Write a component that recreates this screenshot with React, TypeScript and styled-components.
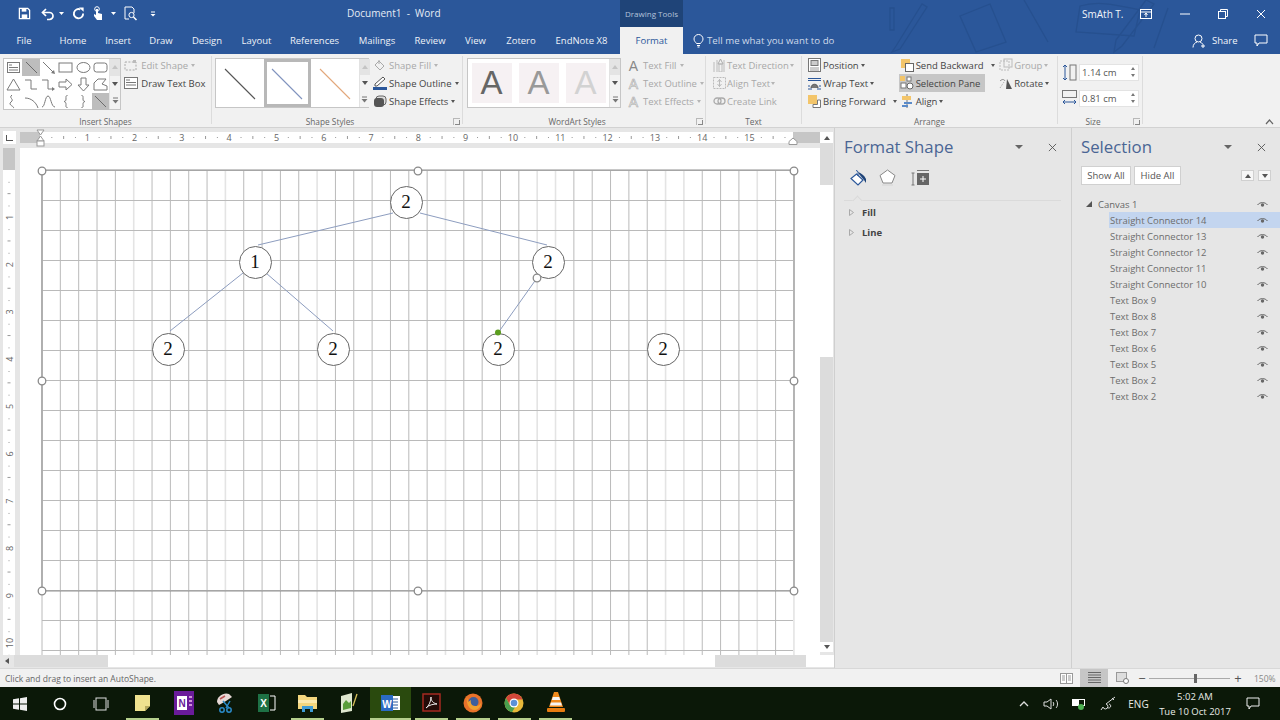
import React from "react";
import styled, { createGlobalStyle } from "styled-components";

const UI = `"Open Sans", "Noto Sans", "Liberation Sans", sans-serif`;

const Global = createGlobalStyle`
  html, body { margin: 0; padding: 0; background: #e6e6e6; }
  #root { width: 1280px; height: 720px; overflow: hidden; }
  * { box-sizing: border-box; }
  svg { display: block; flex: none; }
`;

const Shell = styled.div`
  width: 1280px; height: 720px; display: flex; flex-direction: column;
  font-family: ${UI}; font-size: 10px; color: #444; overflow: hidden;
`;

/* ---------- header ---------- */
const Header = styled.header`
  position: relative; height: 54px; flex: none; background: #2b579a; color: #f2f5fa;
`;
const Doodles = styled.svg`
  position: absolute; left: 860px; top: 0; pointer-events: none;
`;
const TitleRow = styled.div`
  position: relative; height: 27px; display: flex; align-items: center;
`;
const Qat = styled.div`
  width: 347px; height: 27px; padding-left: 17px; display: flex; align-items: center;
`;
const QatSlot = styled.span<{ $w: number; $ml?: number }>`
  width: ${(p) => p.$w}px; margin-left: ${(p) => p.$ml ?? 0}px; display: flex; align-items: center; justify-content: center;
`;
const DocTitle = styled.div`
  width: 273px; padding-bottom: 1px; font-size: 10px; white-space: pre; color: #e6ecf5;
`;
const ContextTab = styled.div`
  width: 63px; height: 27px; background: #1f4478; color: #b4c3da; font-size: 8px;
  display: flex; align-items: center; justify-content: center; white-space: nowrap;
`;
const UserArea = styled.div`
  margin-left: auto; height: 27px; display: flex; align-items: center;
`;
const UserName = styled.span`
  width: 54px; font-size: 10px; white-space: nowrap;
`;
const DisplayBtn = styled.span`
  width: 30px; padding-right: 10px; display: flex; justify-content: center;
`;
const WinBtn = styled.span`
  width: 38px; display: flex; justify-content: center;
`;
const TabRow = styled.nav`
  position: relative; height: 27px; display: flex; align-items: stretch;
`;
const Tab = styled.span<{ $w: number; $active?: boolean }>`
  width: ${(p) => p.$w}px; display: flex; align-items: center; justify-content: center;
  white-space: nowrap; font-size: 9.5px;
  background: ${(p) => (p.$active ? "#f1f1f1" : "transparent")};
  color: ${(p) => (p.$active ? "#2b579a" : "#eef2f8")};
`;
const TellMe = styled.div`
  padding-left: 10px; display: flex; align-items: center; gap: 3px; color: #cfdaea; font-size: 9.7px;
  white-space: nowrap;
`;
const ShareArea = styled.div`
  margin-left: auto; display: flex; align-items: center; padding-right: 12px;
`;
const ShareLabel = styled.span`
  width: 48px; padding-left: 6px; font-size: 9.5px;
`;

/* ---------- ribbon ---------- */
const Ribbon = styled.section`
  position: relative; height: 74px; flex: none; display: flex; background: #f1f1f1;
  border-bottom: 1px solid #d2d2d2;
`;
const Group = styled.div<{ $w: number; $plain?: boolean }>`
  position: relative; width: ${(p) => p.$w}px; flex: none; margin-top: 2px; height: 68px;
  display: flex; flex-direction: column;
  border-right: ${(p) => (p.$plain ? "none" : "1px solid #dcdcdc")};
`;
const GroupBody = styled.div<{ $pad?: number }>`
  height: 59px; flex: none; padding-left: ${(p) => p.$pad ?? 4}px; display: flex; align-items: flex-start;
`;
const GroupLabel = styled.div<{ $launcher?: boolean }>`
  position: relative; height: 14px; flex: none; line-height: 14px; text-align: center; font-size: 8.3px; color: #666;
  white-space: nowrap; padding-right: ${(p) => (p.$launcher ? 14 : 0)}px;
`;
const Launcher = styled.span`
  position: absolute; right: 2px; top: 3px; width: 7px; height: 7px;
  border-left: 1px solid #b8b8b8; border-top: 1px solid #b8b8b8;
  &::after { content: ""; position: absolute; right: 0; bottom: 0; width: 4px; height: 4px;
    border-right: 1px solid #888; border-bottom: 1px solid #888; }
`;
const Collapse = styled.span`
  position: absolute; right: 6px; bottom: 2px;
`;
const ShapeGallery = styled.div`
  width: 120px; height: 52px; margin-top: 2px; background: #fff; border: 1px solid #c6c6c6;
  display: flex;
`;
const ShapeGrid = styled.div`
  flex: 1; display: grid; grid-template-columns: repeat(6, 1fr); grid-auto-rows: 17px; padding-left: 1px;
`;
const ShapeCell = styled.span<{ $on?: boolean }>`
  display: flex; align-items: center; justify-content: center;
  background: ${(p) => (p.$on ? "#bdbdbd" : "transparent")};
`;
const GalleryScroll = styled.div`
  width: 11px; flex: none; display: flex; flex-direction: column; border-left: 1px solid #e2e2e2;
`;
const ScrollCell = styled.span<{ $dim?: boolean }>`
  flex: 1; display: flex; align-items: center; justify-content: center;
  background: ${(p) => (p.$dim ? "#e4e4e4" : "#f3f3f3")};
`;
const Column = styled.div<{ $w: number; $ml?: number; $pt?: number }>`
  width: ${(p) => p.$w}px; margin-left: ${(p) => p.$ml ?? 0}px; padding-top: ${(p) => p.$pt ?? 0}px;
  display: flex; flex-direction: column;
`;
const Item = styled.div<{ $off?: boolean; $on?: boolean; $gap?: number; $pl?: number; $w?: number }>`
  height: 18px; display: flex; align-items: center; gap: ${(p) => p.$gap ?? 3}px; white-space: nowrap;
  padding-left: ${(p) => p.$pl ?? 0}px; width: ${(p) => (p.$w ? `${p.$w}px` : "auto")};
  font-size: 9.5px; color: ${(p) => (p.$off ? "#a8a8a8" : "#444")};
  background: ${(p) => (p.$on ? "#c6c6c6" : "transparent")};
`;
const IconSlot = styled.span`
  width: 13px; height: 14px; flex: none; display: flex; align-items: center; justify-content: center;
`;
const Caret = styled.span<{ $off?: boolean; $ml?: number }>`
  display: inline-block; margin-left: ${(p) => p.$ml ?? 0}px; width: 0; height: 0;
  border-left: 2.5px solid transparent; border-right: 2.5px solid transparent;
  border-top: 3px solid ${(p) => (p.$off ? "#b5b5b5" : "#555")};
`;
const StyleGallery = styled.div`
  width: 154px; height: 50px; margin-top: 2px; background: #fff; border: 1px solid #c6c6c6; display: flex;
`;
const StyleCell = styled.span<{ $on?: boolean }>`
  width: 47.5px; flex: none; display: flex; align-items: center; justify-content: center;
  border: ${(p) => (p.$on ? "3px solid #b8b8b8" : "3px solid transparent")};
`;
const WordCell = styled.span`
  width: 47px; flex: none; display: flex; align-items: center; justify-content: center; padding: 3px;
`;
const WordTile = styled.span<{ $c: string }>`
  width: 40px; height: 40px; background: #f6f1f3; display: flex; align-items: center; justify-content: center;
  color: ${(p) => p.$c}; font-size: 33px; font-family: "Liberation Sans", sans-serif;
`;
const SizeRow = styled.div`
  display: flex; align-items: center; gap: 2px; height: 26px;
`;
const SizeField = styled.div`
  width: 60px; height: 17px; background: #fff; border: 1px solid #e3e3e3; display: flex; align-items: center;
  padding-left: 2px; font-size: 9.5px; color: #555;
`;
const Spin = styled.span`
  margin-left: auto; width: 10px; display: flex; flex-direction: column; gap: 4px; align-items: center;
`;

/* ---------- workspace ---------- */
const Workspace = styled.main`
  height: 540px; flex: none; display: flex; background: #e6e6e6;
`;
const DocArea = styled.div`
  width: 834px; flex: none; display: flex; flex-direction: column;
`;
const DocTop = styled.div`
  height: 527px; display: flex;
`;
const DocMain = styled.div`
  width: 820px; display: flex; flex-direction: column;
`;
const RulerRow = styled.div`
  height: 20px; display: flex;
`;
const Corner = styled.div`
  width: 20px; padding: 3px 0 0 3px;
`;
const CornerBox = styled.div`
  width: 13px; height: 13px; background: #fff; display: flex; align-items: center; justify-content: center;
  &::after { content: ""; width: 6px; height: 5px; border-left: 1.5px solid #555; border-bottom: 1.5px solid #555; }
`;
const PageRow = styled.div`
  height: 507px; display: flex;
`;
const Page = styled.div`
  position: relative; width: 800px; height: 507px; background: #fff; overflow: hidden;
`;
const TreeNode = styled.div<{ $x: number; $y: number }>`
  position: absolute; left: ${(p) => p.$x - 36.5}px; top: ${(p) => p.$y - 164.5}px;
  width: 33px; height: 33px; border-radius: 50%; border: 1px solid #666; background: #fff;
  display: flex; align-items: center; justify-content: center;
  font-family: "Liberation Serif", serif; font-size: 19px; color: #111;
`;
const HandleLayer = styled.svg`
  position: absolute; left: 0; top: 0;
`;
const VScroll = styled.div`
  width: 14px; display: flex; flex-direction: column; padding: 4px 1px 0 0;
`;
const ScrollBtn = styled.span<{ $h?: number }>`
  height: ${(p) => p.$h ?? 11}px; width: 100%; flex: none; background: #fff; display: flex; align-items: center; justify-content: center;
`;
const VTrack = styled.div<{ $h: number; $thumb?: boolean }>`
  height: ${(p) => p.$h}px; flex: none; background: ${(p) => (p.$thumb ? "#fff" : "#dcdcdc")};
`;
const HScroll = styled.div`
  height: 13px; display: flex; padding: 0 15px 1px 0; background: #e6e6e6;
`;
const HEnd = styled.span`
  width: 14px; flex: none; display: flex; align-items: center; justify-content: center; background: #e6e6e6;
`;
const HTrack = styled.span<{ $w: number; $thumb?: boolean }>`
  width: ${(p) => p.$w}px; flex: none; background: ${(p) => (p.$thumb ? "#fff" : "#dcdcdc")};
`;

/* ---------- panes ---------- */
const Pane = styled.aside<{ $w: number }>`
  width: ${(p) => p.$w}px; flex: none; display: flex; flex-direction: column; background: #e6e6e6;
  border-left: 1px solid #cfcfcf;
`;
const PaneHeader = styled.div`
  height: 38px; padding: 0 14px 0 9px; display: flex; align-items: center; gap: 25px;
`;
const PaneTitle = styled.h2`
  margin: 0 auto 0 0; padding-bottom: 1px; font-weight: 400; font-size: 16.8px; color: #4a6594; white-space: nowrap;
`;
const PaneTabs = styled.div`
  position: relative; height: 35px; margin: 0 10px 0 9px; padding: 0 0 11px 1px; display: flex; align-items: center;
  border-bottom: 1px solid #dadada;
`;
const PaneTab = styled.span<{ $w: number }>`
  width: ${(p) => p.$w}px; display: flex; justify-content: center;
`;
const Notch = styled.span`
  position: absolute; left: 10px; bottom: -4px; width: 7px; height: 7px; background: #e6e6e6;
  border-left: 1px solid #dadada; border-top: 1px solid #dadada; transform: rotate(45deg);
`;
const Section = styled.div`
  height: 20px; margin-top: 0; padding-left: 14px; display: flex; align-items: center; gap: 8px;
  font-weight: 700; font-size: 9.5px; color: #444;
`;
const SectionList = styled.div`
  padding-top: 1px;
`;
const ButtonRow = styled.div`
  height: 19px; padding: 0 9px; display: flex; align-items: stretch; gap: 3px;
`;
const PaneButton = styled.span<{ $w: number }>`
  width: ${(p) => p.$w}px; background: #fff; border: 1px solid #d0d0d0; display: flex; align-items: center; justify-content: center;
  font-size: 9.5px; color: #555; white-space: nowrap;
`;
const OrderBtns = styled.span`
  margin-left: auto; display: flex; align-items: center; gap: 4px;
`;
const OrderBtn = styled.span`
  width: 13px; height: 11px; background: #f7f7f7; border: 1px solid #d0d0d0; display: flex; align-items: center; justify-content: center;
`;
const Tree = styled.div`
  padding-top: 11px;
`;
const CanvasRow = styled.div`
  height: 16px; padding: 0 12px 0 14px; display: flex; align-items: center; gap: 6px; font-size: 9.5px; color: #666;
`;
const LayerRow = styled.div<{ $on?: boolean }>`
  height: 16px; margin-left: 37px; padding: 0 12px 0 1px; display: flex; align-items: center; justify-content: space-between;
  font-size: 9.5px; color: #6d6d6d; background: ${(p) => (p.$on ? "#c3d5ef" : "transparent")};
  white-space: nowrap;
`;
const CanvasName = styled.span`
  margin-right: auto;
`;

/* ---------- status ---------- */
const Status = styled.footer`
  height: 19px; flex: none; display: flex; align-items: center; padding-left: 5px; background: #f1f1f1;
  border-top: 1px solid #d8d8d8; font-size: 8.5px; color: #666;
`;
const StatusRight = styled.div`
  margin-left: auto; height: 100%; display: flex; align-items: center;
`;
const ViewBtn = styled.span<{ $on?: boolean }>`
  width: 28px; height: 100%; display: flex; align-items: center; justify-content: center;
  background: ${(p) => (p.$on ? "#c6c6c6" : "transparent")};
`;
const ZoomBar = styled.div`
  position: relative; width: 81px; height: 1px; margin: 0 2px 0 1px; background: #aaa;
`;
const ZoomThumb = styled.span`
  position: absolute; left: 45px; top: -4px; width: 3px; height: 9px; background: #666;
`;
const ZoomLabel = styled.span`
  width: 36px; padding-left: 10px; color: #888; font-size: 8.5px;
`;
const ZoomStep = styled.span`
  width: 12px; text-align: center; font-size: 13px; line-height: 13px; color: #555;
`;

/* ---------- taskbar ---------- */
const Taskbar = styled.footer`
  height: 33px; flex: none; display: flex; background: #0b1808; color: #e8ebe6;
`;
const SysSlot = styled.span<{ $w: number }>`
  width: ${(p) => p.$w}px; height: 100%; flex: none; display: flex; align-items: center; justify-content: center;
`;
const AppSlot = styled.span<{ $run?: boolean; $active?: boolean }>`
  position: relative; width: 41.3px; height: 100%; flex: none; display: flex; align-items: center; justify-content: center;
  padding-bottom: 2px; background: ${(p) => (p.$active ? "#2a4a0e" : "transparent")};
  &::after {
    content: ""; position: absolute; bottom: 0; height: 2px;
    left: ${(p) => (p.$active ? 0 : 4)}px; right: ${(p) => (p.$active ? 0 : 4)}px;
    background: ${(p) => (p.$run ? "#b5cf8d" : "transparent")};
  }
`;
const Tray = styled.div`
  margin-left: auto; padding-right: 10px; display: flex; align-items: center; height: 100%;
`;
const TrayText = styled.span`
  width: 31px; text-align: center; font-size: 10px; white-space: nowrap;
`;
const Clock = styled.div`
  width: 82px; text-align: center; font-size: 9.5px; line-height: 15px; white-space: nowrap;
`;

/* ---------- drawings ---------- */
const S = "#7a7a7a";
type P = { c?: string };
const Ln = ({ d, c = S, w = 1 }: { d: string; c?: string; w?: number }) => <path d={d} stroke={c} strokeWidth={w} fill="none" />;

const SaveIcon = () => (
  <svg width="13" height="13" viewBox="0 0 14 14"><path d="M1.500 1.500h9l2 2v9h-11z" fill="none" stroke="#fff" strokeWidth="1.400" /><rect x="4" y="2" width="5" height="3" fill="#fff" /><rect x="4" y="8" width="6" height="4" fill="#fff" /></svg>
);
const UndoIcon = () => (
  <svg width="14" height="14" viewBox="0 0 14 14"><Ln d="M5 2 1.500 5.500 5 9" c="#fff" w={1.700} /><Ln d="M2 5.500h6.500a3.500 3.500 0 0 1 0 7H6" c="#fff" w={1.700} /></svg>
);
const RedoIcon = () => (
  <svg width="13" height="13" viewBox="0 0 14 14"><Ln d="M9 2.600A5 5 0 1 0 12 7" c="#fff" w={2} /><path d="M7.500 0.500h5v4.500z" fill="#fff" /></svg>
);
const TouchIcon = () => (
  <svg width="12" height="15" viewBox="0 0 12 15"><circle cx="5" cy="3" r="2.300" fill="none" stroke="#fff" /><path d="M4 3v6L2 8v2l3 4h5V8L6 7V3z" fill="#fff" /></svg>
);
const PreviewIcon = () => (
  <svg width="15" height="15" viewBox="0 0 15 15"><Ln d="M2 1h7l2 2v4M6 13H2V1" c="#fff" /><circle cx="8.500" cy="9" r="2.600" fill="none" stroke="#fff" /><Ln d="M10.500 11l3 3" c="#fff" w={1.500} /></svg>
);
const WhiteCaret = () => <svg width="5" height="3" viewBox="0 0 5 3"><path d="M0 0h5L2.500 3z" fill="#fff" /></svg>;
const QatMore = () => <svg width="6" height="6" viewBox="0 0 6 6"><path d="M1 1h4" stroke="#fff" /><path d="M0.500 3h5L3 5.500z" fill="#fff" /></svg>;
const Close = ({ c = "#fff", s = 10 }: P & { s?: number }) => (
  <svg width={s} height={s} viewBox="0 0 10 10"><Ln d="M1 1l8 8M9 1l-8 8" c={c} /></svg>
);
const Bulb = () => (
  <svg width="11" height="14" viewBox="0 0 11 14"><path d="M3.500 9.500C2.500 8 1 7 1 5a4.500 4.500 0 0 1 9 0c0 2-1.500 3-2.500 4.500z" fill="none" stroke="#fff" /><Ln d="M4 11.500h3M4.500 13h2" c="#fff" /></svg>
);
const Person = () => (
  <svg width="14" height="14" viewBox="0 0 14 14"><circle cx="6.500" cy="4.500" r="3.500" fill="none" stroke="#fff" /><Ln d="M1 13.500c0-3 2-5 4-5.500M8 8c1 .4 2 1 2.600 2M9 12h4M11 10v4" c="#fff" /></svg>
);
const Comment = ({ c = "#fff" }: P) => (
  <svg width="14" height="13" viewBox="0 0 14 13"><path d="M1 1h12v8H5l-2 3V9H1z" fill="none" stroke={c} /></svg>
);
const DisplayIcon = () => (
  <svg width="12" height="10" viewBox="0 0 12 10"><rect x=".5" y=".5" width="11" height="9" fill="none" stroke="#fff" /><path d="M.5 3h11" stroke="#fff" /><path d="M6 4v4M4.500 6 6 4l1.500 2" stroke="#fff" fill="none" /></svg>
);
const Restore = () => (
  <svg width="10" height="10" viewBox="0 0 10 10"><rect x=".5" y="2.500" width="7" height="7" fill="none" stroke="#fff" /><path d="M2.500 2V.5h7v7H8" fill="none" stroke="#fff" /></svg>
);
const Minimize = () => <svg width="10" height="10" viewBox="0 0 10 10"><path d="M0 5h10" stroke="#fff" /></svg>;

const Doodle = () => (
  <Doodles width="340" height="54" viewBox="0 0 340 54" fill="none" stroke="#26508f" strokeWidth="1.300">
    <path d="M62 4 36 46l-4 6 8-3 27-42zM100 16l30-12 16 38-30 10z" />
    <path d="M30 8h4v22h-4z" />
    <path d="M164 0 188 42M220 6c20-6 40 0 60 4l-6 26-58-4zM256 40l30-40 8 4-32 42-8 6zM308 8l-14 40" />
  </Doodles>
);

const shapeIcons: React.ReactNode[] = [
  <g key="0"><rect x="1.500" y="2.500" width="12" height="10" fill="none" stroke={S} /><Ln d="M3 5h3M3 7.500h9M3 10h9" /></g>,
  <Ln key="1" d="M2 2l11 11" c="#6b6b6b" />,
  <g key="2"><Ln d="M2 2l11 11" /><path d="M14 14l-4-1 3-3z" fill={S} /></g>,
  <rect key="3" x="1" y="3" width="13" height="9" fill="none" stroke={S} />,
  <ellipse key="4" cx="7.500" cy="7.500" rx="6.500" ry="5" fill="none" stroke={S} />,
  <rect key="5" x="1" y="3" width="13" height="9" rx="2.500" fill="none" stroke={S} />,
  <path key="6" d="M7.500 2 14 13H1z" fill="none" stroke={S} />,
  <Ln key="7" d="M1 3h6v9h6" />,
  <g key="8"><Ln d="M1 3h6v9h5" /><path d="M14 12l-3-2v4z" fill={S} /></g>,
  <path key="9" d="M1 5h7V2l6 5.500-6 5.500v-3H1z" fill="none" stroke={S} />,
  <path key="10" d="M5 1h5v7h3l-5.500 6L2 8h3z" fill="none" stroke={S} />,
  <path key="11" d="M1 13V6l4-4h8l-4 5 5 2v4z" fill="none" stroke={S} />,
  <Ln key="12" d="M6 1C2 4 9 5 5 8s5 5 2 6" />,
  <Ln key="13" d="M1 4c6 0 11 4 13 10" />,
  <Ln key="14" d="M1 13C4 13 4 2 7 2s3 11 7 11" />,
  <Ln key="15" d="M9.500 1.500C7.500 1.500 8 3 8 5S7.500 7 6 7.500C7.500 8 8 8.500 8 10.500S7.500 13.500 9.500 13.500" />,
  <Ln key="16" d="M5.500 1.500C7.500 1.500 7 3 7 5S7.500 7 9 7.500C7.500 8 7 8.500 7 10.500S7.500 13.500 5.500 13.500" />,
  <Ln key="17" d="M2 2l11 11" c="#6b6b6b" />,
];
const ShapeIcon = ({ i }: { i: number }) => <svg width="15" height="15" viewBox="0 0 15 15">{shapeIcons[i]}</svg>;

const MiniUp = ({ c = "#8a8a8a" }: P) => <svg width="6" height="4" viewBox="0 0 6 4"><path d="M0 4h6L3 0z" fill={c} /></svg>;
const MiniDown = ({ c = "#555" }: P) => <svg width="6" height="4" viewBox="0 0 6 4"><path d="M0 0h6L3 4z" fill={c} /></svg>;
const TinyUp = () => <svg width="4" height="3" viewBox="0 0 4 3"><path d="M0 3h4L2 0z" fill="#777" /></svg>;
const TinyDown = () => <svg width="4" height="3" viewBox="0 0 4 3"><path d="M0 0h4L2 3z" fill="#777" /></svg>;
const MiniMore = ({ c = "#777" }: P) => <svg width="7" height="7" viewBox="0 0 7 7"><path d="M1 1h5" stroke={c} /><path d="M.5 3h6L3.500 6.500z" fill={c} /></svg>;
const GalScroll = ({ dim }: { dim?: boolean }) => (
  <GalleryScroll>
    <ScrollCell $dim={dim}><MiniUp c="#c4c4c4" /></ScrollCell>
    <ScrollCell><MiniDown /></ScrollCell>
    <ScrollCell><MiniMore /></ScrollCell>
  </GalleryScroll>
);
const StyleLine = ({ c }: { c: string }) => (
  <svg width="34" height="34" viewBox="0 0 34 34"><path d="M2 3l30 30" stroke={c} strokeWidth="1.100" /></svg>
);

const I = {
  edit: <svg width="14" height="13" viewBox="0 0 14 13"><path d="M1 3h11v8H1z" fill="none" stroke="#aaa" strokeDasharray="2 1.400" /><rect x="9" y="1" width="3" height="3" fill="#bbb" /></svg>,
  textbox: <svg width="14" height="12" viewBox="0 0 14 12"><rect x=".5" y=".5" width="13" height="11" fill="#fff" stroke="#777" /><Ln d="M2 3h4M2 5.500h10M2 8h10" c="#777" /></svg>,
  fill: <svg width="13" height="13" viewBox="0 0 13 13"><path d="M6 2l5 5-4 4-5-5z" fill="none" stroke="#aaa" /><path d="M6 1v4" stroke="#aaa" /></svg>,
  outline: <svg width="14" height="14" viewBox="0 0 14 14"><path d="M2 8 10 1l2 2-8 7H2z" fill="#fff" stroke="#555" /><rect x="0" y="11" width="14" height="3" fill="#2b579a" /></svg>,
  effects: <svg width="14" height="13" viewBox="0 0 14 13"><rect x="3" y="1" width="10" height="9" rx="3" fill="#ddd" stroke="#666" /><rect x="1" y="3" width="10" height="9" rx="3" fill="#555" /></svg>,
  posn: <svg width="13" height="14" viewBox="0 0 13 14"><rect x=".5" y=".5" width="12" height="13" fill="#fff" stroke="#777" /><rect x="3" y="2.500" width="7" height="5" fill="#ccc" stroke="#777" /><Ln d="M2 10h9M2 12h9" c="#999" /></svg>,
  wrap: <svg width="13" height="13" viewBox="0 0 13 13"><Ln d="M0 1.500h13M0 3.500h13M0 12h4M9 12h4M0 9h2M11 9h2" c="#2b579a" /><path d="M3 11C3 6 10 6 10 11" fill="#777" stroke="#555" /></svg>,
  forward: <svg width="13" height="13" viewBox="0 0 13 13"><rect x="0" y="0" width="9" height="9" fill="#f3c56a" /><path d="M5 9.500h4.500V5h3v7.500H5z" fill="#fff" stroke="#777" /></svg>,
  backward: <svg width="13" height="13" viewBox="0 0 13 13"><rect x="0" y="0" width="9" height="9" fill="#f3c56a" /><rect x="4.500" y="4.500" width="8" height="8" fill="#fff" stroke="#666" /></svg>,
  pane: <svg width="14" height="14" viewBox="0 0 14 14"><rect x="0" y="0" width="5" height="5" fill="#f3c56a" /><rect x="7" y="1" width="4" height="4" fill="#fff" stroke="#777" /><rect x="1" y="7" width="5" height="5" fill="#fff" stroke="#777" /><circle cx="10" cy="10" r="3" fill="#fff" stroke="#666" /></svg>,
  align: <svg width="12" height="14" viewBox="0 0 12 14"><path d="M6 0v14" stroke="#777" /><rect x="1" y="2" width="9" height="4" fill="#f3c56a" /><rect x="3" y="8" width="8" height="2" fill="#5b8bc9" /><rect x="1" y="11" width="6" height="2" fill="#5b8bc9" /></svg>,
  group: <svg width="14" height="14" viewBox="0 0 14 14"><rect x="1" y="3" width="9" height="9" fill="none" stroke="#bbb" strokeDasharray="2 1" /><rect x="5" y="1" width="8" height="8" fill="none" stroke="#bbb" /></svg>,
  rotate: <svg width="14" height="12" viewBox="0 0 14 12"><path d="M7 12h6L8 2z" fill="#555" /><path d="M1 11 5 5" stroke="#aaa" strokeDasharray="1 1" /><path d="M1 4c2-2 4-2 5 0" fill="none" stroke="#888" /></svg>,
  direction: <svg width="13" height="14" viewBox="0 0 13 14"><Ln d="M1 4v10M4 2v12M11 2v12" c="#bbb" /><path d="M7.500 1 10 6H5z" fill="none" stroke="#aaa" /><rect x="6" y="6" width="3" height="8" fill="none" stroke="#bbb" /></svg>,
  alignText: <svg width="13" height="14" viewBox="0 0 13 14"><rect x=".5" y="1.500" width="12" height="11" fill="none" stroke="#bbb" strokeDasharray="2 1" /><path d="M6.500 3v8M4.500 6l2-2.500 2 2.500M4.500 8l2 2.500 2-2.500" fill="none" stroke="#bbb" /></svg>,
  link: <svg width="13" height="8" viewBox="0 0 13 8"><rect x="1" y="1" width="7" height="6" rx="3" fill="none" stroke="#aaa" strokeWidth="1.300" /><rect x="5" y="1" width="7" height="6" rx="3" fill="none" stroke="#aaa" strokeWidth="1.300" /></svg>,
  height: <svg width="15" height="17" viewBox="0 0 15 17"><path d="M3 1v15M1 3l2-2 2 2M1 14l2 2 2-2" fill="none" stroke="#2b579a" /><rect x="8" y="1" width="6" height="15" fill="none" stroke="#777" /></svg>,
  width: <svg width="15" height="16" viewBox="0 0 15 16"><rect x=".5" y=".5" width="14" height="7" fill="none" stroke="#777" /><path d="M1 12h13M3 10l-2 2 2 2M12 10l2 2-2 2" fill="none" stroke="#2b579a" /></svg>,
};
const AText = ({ c, outline }: { c: string; outline?: boolean }) => (
  <svg width="13" height="13" viewBox="0 0 13 13">
    <text x="6.500" y="11.500" textAnchor="middle" fontSize="14" fontFamily="Liberation Sans, sans-serif" fill={outline ? "none" : c} stroke={outline ? c : "none"} strokeWidth=".6">A</text>
  </svg>
);

const Eye = () => (
  <svg width="11" height="7" viewBox="0 0 11 7"><path d="M.5 4C3 .8 8 .8 10.500 4" fill="none" stroke="#666" /><circle cx="5.500" cy="4" r="1.700" fill="#666" /></svg>
);
const PaneCaret = () => <svg width="8" height="4" viewBox="0 0 8 4"><path d="M0 0h8L4 4z" fill="#666" /></svg>;
const Hollow = () => <svg width="5" height="7" viewBox="0 0 5 7"><path d="M.5.500 4.500 3.500.5 6.500z" fill="none" stroke="#aaa" /></svg>;
const Solid = () => <svg width="6" height="6" viewBox="0 0 6 6"><path d="M6 0v6H0z" fill="#555" /></svg>;

const GRID_X = Array.from({ length: 42 }, (_, i) => 42 + i * 18.34);
const LIGHT = new Set([5, 10, 15, 22, 27, 28, 34, 35, 39, 41]);
const GRID_Y = Array.from({ length: 17 }, (_, i) => 170.5 + i * 30);
const Handle = ({ x, y }: { x: number; y: number }) => <circle cx={x} cy={y} r="3.800" fill="#fff" stroke="#8a8a8a" strokeWidth="1.300" />;
const nodes: [number, number, string][] = [
  [406, 202, "2"], [255, 262, "1"], [548, 262, "2"], [168, 349, "2"], [333, 349, "2"], [498, 349, "2"], [663, 349, "2"],
];

const HRuler = () => {
  const unit = 47.3;
  const marks = [];
  for (let i = 0; i < 16; i++) {
    const x = 40 + i * unit;
    if (i > 0) marks.push(<text key={"n" + i} x={x} y="13" textAnchor="middle" fontSize="9" fill="#666" fontFamily={UI}>{i}</text>);
    marks.push(<path key={"a" + i} d={`M${x + unit / 4 - .5} 9.500h1`} stroke="#999" />);
    marks.push(<path key={"b" + i} d={`M${x + unit / 2} 8v3`} stroke="#999" />);
    marks.push(<path key={"c" + i} d={`M${x + unit * 3 / 4 - .5} 9.500h1`} stroke="#999" />);
  }
  return (
    <svg width="800" height="20" viewBox="20 0 800 20">
      <rect x="20" y="4" width="800" height="11" fill="#fff" />
      <rect x="20" y="4" width="20" height="11" fill="#c6c6c6" />
      {marks}
      <rect x="793" y="4" width="27" height="11" fill="#c6c6c6" />
      <path d="M37 2h7l-3.500 5zM37 13l3.500-5L44 13z" fill="#fff" stroke="#999" />
      <rect x="37" y="13" width="7" height="5" fill="#fff" stroke="#999" />
      <path d="M793 10l4 3.500v3h-8v-3z" fill="#fff" stroke="#999" />
    </svg>
  );
};
const VRuler = () => {
  const unit = 47.3;
  const marks = [];
  for (let i = 0; i < 11; i++) {
    const y = 170 + i * unit;
    if (i > 0) marks.push(<text key={"n" + i} transform={`translate(12.500 ${y}) rotate(-90)`} textAnchor="middle" fontSize="9" fill="#666" fontFamily={UI}>{i}</text>);
    marks.push(<path key={"a" + i} d={`M9 ${y + unit / 4}v1`} stroke="#999" />);
    marks.push(<path key={"b" + i} d={`M7.500 ${y + unit / 2}h3`} stroke="#999" />);
    marks.push(<path key={"c" + i} d={`M9 ${y + unit * 3 / 4}v1`} stroke="#999" />);
  }
  return (
    <svg width="20" height="507" viewBox="0 148 20 507">
      <rect x="3" y="148" width="12" height="507" fill="#fff" />
      <rect x="3" y="148" width="12" height="22" fill="#c6c6c6" />
      {marks}
    </svg>
  );
};

const Win = () => <svg width="14" height="14" viewBox="0 0 14 14"><path d="M0 2.200 6 1.300v5.200H0zM7 1.200 14 0v6.500H7zM0 7.500h6v5.200L0 11.800zM7 7.500h7V14l-7-1.200z" fill="#eee" /></svg>;
const Cortana = () => <svg width="14" height="14" viewBox="0 0 14 14"><circle cx="7" cy="7" r="5.500" fill="none" stroke="#fff" strokeWidth="1.600" /></svg>;
const TaskView = () => <svg width="16" height="14" viewBox="0 0 16 14"><rect x="3" y="1" width="10" height="12" fill="none" stroke="#ddd" /><Ln d="M1 3v8M15 3v8" c="#ddd" /></svg>;
const Sticky = () => <svg width="15" height="16" viewBox="0 0 15 16"><path d="M0 0h15v11l-5 5H0z" fill="#efe28f" /><path d="M10 16v-5h5z" fill="#b6aa5e" /></svg>;
const OneNote = () => (
  <svg width="20" height="24" viewBox="0 0 20 24"><rect x="0" y="0" width="20" height="24" fill="#6a1b9a" /><rect x="3" y="5" width="10" height="14" fill="#fff" /><text x="8" y="16" textAnchor="middle" fontSize="10" fontWeight="700" fontFamily="Liberation Sans, sans-serif" fill="#6a1b9a">N</text><path d="M15 6h3M15 10h3M15 14h3" stroke="#ce93d8" strokeWidth="2" /></svg>
);
const Snip = () => (
  <svg width="18" height="22" viewBox="0 0 18 22"><path d="M1 10C1 4 8 0 13 2l3 3-6 4-7 4z" fill="#e8d9d6" /><path d="M4 7l5-3" stroke="#b55" strokeWidth="1.500" /><path d="M7 9l6 7M14 9l-4 7" stroke="#2a8ac8" strokeWidth="1.500" /><circle cx="6" cy="18" r="2.200" fill="none" stroke="#2a8ac8" strokeWidth="1.500" /><circle cx="13" cy="18" r="2.200" fill="none" stroke="#2a8ac8" strokeWidth="1.500" /></svg>
);
const Excel = () => (
  <svg width="18" height="18" viewBox="0 0 18 18"><rect x="0" y="0" width="11" height="18" fill="#1e7145" /><text x="5.500" y="13" textAnchor="middle" fontSize="10" fontWeight="700" fontFamily="Liberation Sans, sans-serif" fill="#fff">X</text><path d="M12 2h5v14h-5" fill="none" stroke="#fff" /></svg>
);
const Folder = () => (
  <svg width="19" height="18" viewBox="0 0 19 18"><path d="M0 1h7l2 2h10v12H0z" fill="#f3d67e" /><path d="M0 6h19v3H0z" fill="#fbe9ae" /><path d="M4 18v-6h11v6h-3v-3H7v3z" fill="#3d9bd6" /></svg>
);
const Project = () => (
  <svg width="17" height="20" viewBox="0 0 17 20"><path d="M0 3l11-3v18L0 20z" fill="#dfe8cf" /><path d="M2 11l3-4 3 3 2-2v7L2 17z" fill="#5a9e3a" /><path d="M16 1 12 13" stroke="#d8c25a" strokeWidth="1.300" /></svg>
);
const Word = () => (
  <svg width="19" height="18" viewBox="0 0 19 18"><rect x="9" y="2" width="10" height="14" fill="#fff" /><path d="M11 5h6M11 8h6M11 11h6M11 14h6" stroke="#2b579a" /><rect x="0" y="1" width="12" height="16" fill="#2b6bc4" /><text x="6" y="13.500" textAnchor="middle" fontSize="10" fontWeight="700" fontFamily="Liberation Sans, sans-serif" fill="#fff">W</text></svg>
);
const Acrobat = () => (
  <svg width="19" height="19" viewBox="0 0 19 19"><rect x="1" y="1" width="17" height="17" fill="#230b08" stroke="#a52a20" strokeWidth="1.500" /><path d="M4 15c3-2 5-7 5-11 0 4 2 6 6 7-4 0-8 1-11 4z" fill="none" stroke="#eee" /></svg>
);
const Firefox = () => (
  <svg width="20" height="20" viewBox="0 0 20 20"><circle cx="10" cy="10" r="9.500" fill="#e8722a" /><circle cx="10.500" cy="9" r="5" fill="#3e5f9c" /><path d="M4 4c-1 5 1 13 8 13 3 0 6-3 6-7-2 3-4 3-6 3-3 0-5-3-4-6L5 9z" fill="#f0a030" /></svg>
);
const Chrome = () => (
  <svg width="20" height="20" viewBox="0 0 20 20"><circle cx="10" cy="10" r="9.500" fill="#e8b93a" /><path d="M10 .5a9.500 9.500 0 0 0-8 4.500l4 7 4-5.500h8.500A9.500 9.500 0 0 0 10 .5z" fill="#d2473a" /><path d="M2 5a9.500 9.500 0 0 0 6 14.300l4-6.800-6 0z" fill="#4a9e4f" /><circle cx="10" cy="10" r="4.500" fill="#fff" /><circle cx="10" cy="10" r="3.300" fill="#5a90d8" /></svg>
);
const Vlc = () => (
  <svg width="20" height="21" viewBox="0 0 20 21"><path d="M8 0h4l5 15H3z" fill="#f08a1c" /><path d="M6.800 5h6.400l1 3H5.800zM5 10.500h10l1 3H4z" fill="#f5f5f5" /><rect x="1" y="16" width="18" height="4" rx="1" fill="#e87c10" /></svg>
);

const Chevron = () => <svg width="10" height="6" viewBox="0 0 10 6"><path d="M1 5 5 1l4 4" fill="none" stroke="#ddd" strokeWidth="1.300" /></svg>;
const Speaker = () => <svg width="17" height="14" viewBox="0 0 17 14"><path d="M1 5h3l4-3v10L4 9H1z" fill="none" stroke="#ddd" /><path d="M10 5c1 1 1 3 0 4M13 3c2 2 2 6 0 8" fill="none" stroke="#ddd" /></svg>;
const Battery = () => <svg width="14" height="14" viewBox="0 0 14 14"><rect x="0" y="2" width="13" height="7" fill="#fff" /><rect x="7" y="3" width="5" height="5" fill="#0b1808" /><circle cx="9" cy="10" r="3" fill="#4caf50" /></svg>;
const Pen = () => <svg width="16" height="16" viewBox="0 0 16 16"><path d="M15 1 6 8a2.500 2.500 0 1 1-3 3l-2 3M12 2l2 2M9 8a2 2 0 1 1-2 3" fill="none" stroke="#ddd" /></svg>;

const viewRead = <svg width="13" height="11" viewBox="0 0 13 11"><rect x=".5" y=".5" width="12" height="10" fill="#fff" stroke="#999" /><path d="M6.500 1v9M2 3h3M2 5h3M2 7h3M8 3h3M8 5h3M8 7h3" stroke="#999" /></svg>;
const viewPrint = <svg width="13" height="12" viewBox="0 0 13 12"><path d="M0 .5h13M0 3h13M0 5.500h13M0 8h13M0 10.500h13" stroke="#666" /></svg>;
const viewWeb = <svg width="13" height="12" viewBox="0 0 13 12"><rect x=".5" y=".5" width="10" height="9" fill="#ddd" stroke="#999" /><circle cx="10" cy="9" r="2.500" fill="#fff" stroke="#777" /></svg>;

const tabs: [string, number][] = [
  ["File", 48], ["Home", 50], ["Insert", 40], ["Draw", 46], ["Design", 46], ["Layout", 53], ["References", 63],
  ["Mailings", 62], ["Review", 44], ["View", 47], ["Zotero", 44], ["EndNote X8", 77],
];
const layers = [
  "Straight Connector 14", "Straight Connector 13", "Straight Connector 12", "Straight Connector 11", "Straight Connector 10",
  "Text Box 9", "Text Box 8", "Text Box 7", "Text Box 6", "Text Box 5", "Text Box 2", "Text Box 2",
];

export default function App() {
  return (
    <Shell>
      <Global />
      <Header>
        <Doodle />
        <TitleRow>
          <Qat>
            <QatSlot $w={14}><SaveIcon /></QatSlot>
            <QatSlot $w={20} $ml={7}><UndoIcon /></QatSlot>
            <QatSlot $w={6}><WhiteCaret /></QatSlot>
            <QatSlot $w={22} $ml={3}><RedoIcon /></QatSlot>
            <QatSlot $w={18}><TouchIcon /></QatSlot>
            <QatSlot $w={12}><WhiteCaret /></QatSlot>
            <QatSlot $w={22}><PreviewIcon /></QatSlot>
            <QatSlot $w={24}><QatMore /></QatSlot>
          </Qat>
          <DocTitle>{"Document1  -  Word"}</DocTitle>
          <ContextTab>Drawing Tools</ContextTab>
          <UserArea>
            <UserName>SmAth T.</UserName>
            <DisplayBtn><DisplayIcon /></DisplayBtn>
            <WinBtn><Minimize /></WinBtn>
            <WinBtn><Restore /></WinBtn>
            <WinBtn><Close /></WinBtn>
          </UserArea>
        </TitleRow>
        <TabRow>
          {tabs.map(([t, w]) => <Tab key={t} $w={w}>{t}</Tab>)}
          <Tab $w={63} $active>Format</Tab>
          <TellMe><Bulb />Tell me what you want to do</TellMe>
          <ShareArea>
            <Person />
            <ShareLabel>Share</ShareLabel>
            <Comment />
          </ShareArea>
        </TabRow>
      </Header>

      <Ribbon>
        <Group $w={212}>
          <GroupBody $pad={3}>
            <ShapeGallery>
              <ShapeGrid>
                {shapeIcons.map((_, i) => (
                  <ShapeCell key={i} $on={i === 1 || i === 17}><ShapeIcon i={i} /></ShapeCell>
                ))}
              </ShapeGrid>
              <GalScroll dim />
            </ShapeGallery>
            <Column $w={88} $ml={3}>
              <Item $off>{I.edit}<span>Edit Shape</span><Caret $off /></Item>
              <Item>{I.textbox}<span>Draw Text Box</span></Item>
            </Column>
          </GroupBody>
          <GroupLabel>Insert Shapes</GroupLabel>
        </Group>

        <Group $w={251}>
          <GroupBody $pad={3}>
            <StyleGallery>
              <StyleCell><StyleLine c="#555" /></StyleCell>
              <StyleCell $on><StyleLine c="#7f93bd" /></StyleCell>
              <StyleCell><StyleLine c="#e2a77a" /></StyleCell>
              <GalScroll dim />
            </StyleGallery>
            <Column $w={86} $ml={4}>
              <Item $off><IconSlot>{I.fill}</IconSlot><span>Shape Fill</span><Caret $off /></Item>
              <Item><IconSlot>{I.outline}</IconSlot><span>Shape Outline</span><Caret /></Item>
              <Item><IconSlot>{I.effects}</IconSlot><span>Shape Effects</span><Caret /></Item>
            </Column>
          </GroupBody>
          <GroupLabel $launcher>Shape Styles<Launcher /></GroupLabel>
        </Group>

        <Group $w={243}>
          <GroupBody>
            <StyleGallery>
              <WordCell><WordTile $c="#666">A</WordTile></WordCell>
              <WordCell><WordTile $c="#999">A</WordTile></WordCell>
              <WordCell><WordTile $c="#d2d2d2">A</WordTile></WordCell>
              <GalScroll dim />
            </StyleGallery>
            <Column $w={76} $ml={6}>
              <Item $off><IconSlot><AText c="#888" /></IconSlot><span>Text Fill</span><Caret $off /></Item>
              <Item $off><IconSlot><AText c="#aaa" outline /></IconSlot><span>Text Outline</span><Caret $off /></Item>
              <Item $off><IconSlot><AText c="#aaa" outline /></IconSlot><span>Text Effects</span><Caret $off /></Item>
            </Column>
          </GroupBody>
          <GroupLabel $launcher>WordArt Styles<Launcher /></GroupLabel>
        </Group>

        <Group $w={96}>
          <GroupBody $pad={7}>
            <Column $w={88}>
              <Item $off $gap={1}><IconSlot>{I.direction}</IconSlot><span>Text Direction</span><Caret $off /></Item>
              <Item $off $gap={1}><IconSlot>{I.alignText}</IconSlot><span>Align Text</span><Caret $off /></Item>
              <Item $off $gap={1}><IconSlot>{I.link}</IconSlot><span>Create Link</span></Item>
            </Column>
          </GroupBody>
          <GroupLabel>Text</GroupLabel>
        </Group>

        <Group $w={256}>
          <GroupBody $pad={6}>
            <Column $w={91}>
              <Item $gap={2}><IconSlot>{I.posn}</IconSlot><span>Position</span><Caret /></Item>
              <Item $gap={2}><IconSlot>{I.wrap}</IconSlot><span>Wrap Text</span><Caret /></Item>
              <Item $gap={2}><IconSlot>{I.forward}</IconSlot><span>Bring Forward</span><Caret $ml={5} /></Item>
            </Column>
            <Column $w={100}>
              <Item $gap={2} $pl={2}><IconSlot>{I.backward}</IconSlot><span>Send Backward</span><Caret $ml={5} /></Item>
              <Item $on $gap={2} $pl={2} $w={86}><IconSlot>{I.pane}</IconSlot><span>Selection Pane</span></Item>
              <Item $gap={2} $pl={2}><IconSlot>{I.align}</IconSlot><span>Align</span><Caret /></Item>
            </Column>
            <Column $w={58} $ml={1}>
              <Item $off $gap={2}><IconSlot>{I.group}</IconSlot><span>Group</span><Caret $off /></Item>
              <Item $gap={2}><IconSlot>{I.rotate}</IconSlot><span>Rotate</span><Caret /></Item>
            </Column>
          </GroupBody>
          <GroupLabel>Arrange</GroupLabel>
        </Group>

        <Group $w={85}>
          <GroupBody $pad={4}>
            <Column $w={78} $pt={3}>
              <SizeRow>{I.height}<SizeField>1.14 cm<Spin><TinyUp /><TinyDown /></Spin></SizeField></SizeRow>
              <SizeRow>{I.width}<SizeField>0.81 cm<Spin><TinyUp /><TinyDown /></Spin></SizeField></SizeRow>
            </Column>
          </GroupBody>
          <GroupLabel $launcher>Size<Launcher /></GroupLabel>
        </Group>
        <Collapse><svg width="9" height="6" viewBox="0 0 9 6"><path d="M1 5 4.500 1 8 5" fill="none" stroke="#666" strokeWidth="1.200" /></svg></Collapse>
      </Ribbon>

      <Workspace>
        <DocArea>
          <DocTop>
            <DocMain>
              <RulerRow>
                <Corner><CornerBox /></Corner>
                <HRuler />
              </RulerRow>
              <PageRow>
                <VRuler />
                <Page>
                  <svg width="800" height="507" viewBox="20 148 800 507">
                    {GRID_X.map((x, i) => (
                      <path key={"v" + i} d={`M${x} 170V655`} stroke={LIGHT.has(i) ? "#e4e4e4" : "#bababa"} strokeWidth={LIGHT.has(i) ? 1.600 : 1} />
                    ))}
                    {GRID_Y.map((y, i) => (
                      <path key={"h" + i} d={`M42 ${y}H793`} stroke="#bababa" />
                    ))}
                    <path d="M42 170H794V591H42z" fill="none" stroke="#929292" strokeWidth="1.200" />
                    <path d="M42 170V591" stroke="#b0b0b0" strokeWidth="1.600" />
                    <g stroke="#8d9dbf" strokeWidth="1" fill="none">
                      <path d="M393 213 258 245" />
                      <path d="M420 213 547 245" />
                      <path d="M243 273 170 331" />
                      <path d="M266 273 333 331" />
                      <path d="M537 278 498 333" />
                    </g>
                    <Handle x={42} y={171} /><Handle x={418} y={171} /><Handle x={794} y={171} />
                    <Handle x={42} y={381} /><Handle x={794} y={381} />
                    <Handle x={42} y={591} /><Handle x={418} y={591} /><Handle x={794} y={591} />
                  </svg>
                  {nodes.map(([x, y, t], i) => <TreeNode key={i} $x={x} $y={y}>{t}</TreeNode>)}
                  <HandleLayer width="800" height="507" viewBox="20 148 800 507">
                    <Handle x={537} y={278} />
                    <circle cx="498" cy="332.500" r="3" fill="#5c9e1e" />
                  </HandleLayer>
                </Page>
              </PageRow>
            </DocMain>
            <VScroll>
              <ScrollBtn><MiniUp c="#555" /></ScrollBtn>
              <VTrack $h={42} />
              <VTrack $h={172} $thumb />
              <VTrack $h={285} />
              <ScrollBtn $h={10}><MiniDown /></ScrollBtn>
            </VScroll>
          </DocTop>
          <HScroll>
            <HEnd><svg width="4" height="6" viewBox="0 0 4 6"><path d="M4 0v6L0 3z" fill="#555" /></svg></HEnd>
            <HTrack $w={94} />
            <HTrack $w={607} $thumb />
            <HTrack $w={91} />
            <ScrollBtn $h={12}><svg width="4" height="6" viewBox="0 0 4 6"><path d="M0 0v6L4 3z" fill="#555" /></svg></ScrollBtn>
          </HScroll>
        </DocArea>

        <Pane $w={237}>
          <PaneHeader>
            <PaneTitle>Format Shape</PaneTitle>
            <PaneCaret />
            <Close c="#555" s={9} />
          </PaneHeader>
          <PaneTabs>
            <PaneTab $w={26}>
              <svg width="19" height="18" viewBox="0 0 19 18"><path d="M7.500 5 14 11l-5 5-7-6.500z" fill="#fff" stroke="#2b579a" strokeWidth="1.200" /><path d="M7 1.500a2 2 0 0 1 2 2V7" fill="none" stroke="#2b579a" /><path d="M9 3c3 1 6 3 8 7v4l-2-3-5-6z" fill="#1f4478" /></svg>
            </PaneTab>
            <PaneTab $w={33}>
              <svg width="17" height="18" viewBox="0 0 17 18"><path d="M8.500 1 16 6.500 13 14H4L1 6.500z" fill="#fff" stroke="#888" /><path d="M3 16h11" stroke="#ddd" strokeWidth="2" /></svg>
            </PaneTab>
            <PaneTab $w={33}>
              <svg width="19" height="17" viewBox="0 0 19 17"><rect x="6" y="4" width="12" height="12" fill="#666" /><path d="M12 7v6M9 10h6" stroke="#fff" /><path d="M2 4v12M0.500 4h3M.5 16h3M6 1.500h12" stroke="#777" /></svg>
            </PaneTab>
            <Notch />
          </PaneTabs>
          <SectionList>
            <Section><Hollow />Fill</Section>
            <Section><Hollow />Line</Section>
          </SectionList>
        </Pane>

        <Pane $w={209}>
          <PaneHeader>
            <PaneTitle>Selection</PaneTitle>
            <PaneCaret />
            <Close c="#555" s={9} />
          </PaneHeader>
          <ButtonRow>
            <PaneButton $w={50}>Show All</PaneButton>
            <PaneButton $w={47}>Hide All</PaneButton>
            <OrderBtns>
              <OrderBtn><MiniUp c="#555" /></OrderBtn>
              <OrderBtn><MiniDown c="#555" /></OrderBtn>
            </OrderBtns>
          </ButtonRow>
          <Tree>
            <CanvasRow><Solid /><CanvasName>Canvas 1</CanvasName><Eye /></CanvasRow>
            {layers.map((l, i) => (
              <LayerRow key={i} $on={i === 0}><span>{l}</span><Eye /></LayerRow>
            ))}
          </Tree>
        </Pane>
      </Workspace>

      <Status>
        Click and drag to insert an AutoShape.
        <StatusRight>
          <ViewBtn>{viewRead}</ViewBtn>
          <ViewBtn $on>{viewPrint}</ViewBtn>
          <ViewBtn>{viewWeb}</ViewBtn>
          <ZoomStep>−</ZoomStep>
          <ZoomBar><ZoomThumb /></ZoomBar>
          <ZoomStep>+</ZoomStep>
          <ZoomLabel>150%</ZoomLabel>
        </StatusRight>
      </Status>

      <Taskbar>
        <SysSlot $w={40}><Win /></SysSlot>
        <SysSlot $w={40}><Cortana /></SysSlot>
        <SysSlot $w={42}><TaskView /></SysSlot>
        <AppSlot $run><Sticky /></AppSlot>
        <AppSlot><OneNote /></AppSlot>
        <AppSlot><Snip /></AppSlot>
        <AppSlot><Excel /></AppSlot>
        <AppSlot $run><Folder /></AppSlot>
        <AppSlot><Project /></AppSlot>
        <AppSlot $run $active><Word /></AppSlot>
        <AppSlot $run><Acrobat /></AppSlot>
        <AppSlot $run><Firefox /></AppSlot>
        <AppSlot $run><Chrome /></AppSlot>
        <AppSlot $run><Vlc /></AppSlot>
        <Tray>
          <SysSlot $w={26}><Chevron /></SysSlot>
          <SysSlot $w={28}><Speaker /></SysSlot>
          <SysSlot $w={28}><Battery /></SysSlot>
          <SysSlot $w={30}><Pen /></SysSlot>
          <TrayText>ENG</TrayText>
          <Clock>5:02 AM<br />Tue 10 Oct 2017</Clock>
          <SysSlot $w={34}><Comment c="#eee" /></SysSlot>
        </Tray>
      </Taskbar>
    </Shell>
  );
}
